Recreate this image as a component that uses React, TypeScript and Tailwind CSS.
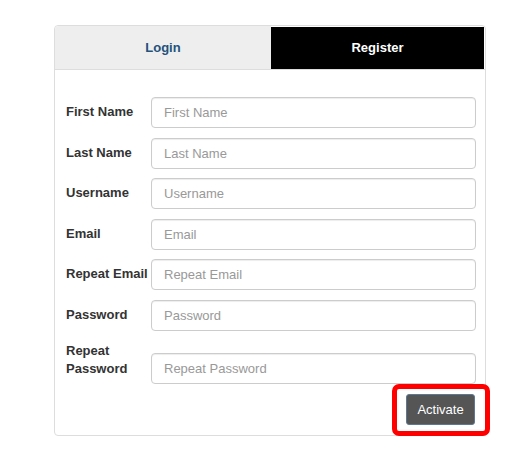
import React from "react";

const fields = [
  { label: "First Name", placeholder: "First Name", type: "text" },
  { label: "Last Name", placeholder: "Last Name", type: "text" },
  { label: "Username", placeholder: "Username", type: "text" },
  { label: "Email", placeholder: "Email", type: "email" },
  { label: "Repeat Email", placeholder: "Repeat Email", type: "email" },
  { label: "Password", placeholder: "Password", type: "password" },
];

const inputClass =
  "h-[31px] flex-1 rounded-[4px] border border-[#cccccc] bg-white px-3 text-[13px] text-[#555] shadow-[inset_0_1px_1px_rgba(0,0,0,0.075)] outline-none placeholder:text-[#999999]";

export default function App() {
  return (
    <div className="min-h-screen bg-white pt-[25px] font-['Liberation_Sans',Arial,sans-serif]">
      <div className="relative ml-[54px] w-[432px] rounded-[4px] border border-[#dddddd] bg-white">
        <div className="flex h-[44px] border-b border-[#dddddd]">
          <button className="flex-1 rounded-tl-[4px] bg-[#eeeeee] text-[13px] font-bold text-[#23527c]">
            Login
          </button>
          <button className="mr-px mt-px w-[213px] bg-black text-[13px] font-bold text-white">
            Register
          </button>
        </div>

        <form className="flex flex-col gap-[9.5px] pl-[11px] pr-[9px] pt-[27px]">
          {fields.map((f) => (
            <div key={f.label} className="flex items-start">
              <label className="w-[85px] shrink-0 whitespace-nowrap pt-[6px] text-[13px] font-bold leading-[18px] text-[#333]">
                {f.label}
              </label>
              <input type={f.type} placeholder={f.placeholder} className={inputClass} />
            </div>
          ))}
          <div className="flex items-start">
            <label className="w-[85px] shrink-0 pt-[2px] text-[13px] font-bold leading-[18px] text-[#333]">
              Repeat
              <br />
              Password
            </label>
            <input type="password" placeholder="Repeat Password" className={`${inputClass} mt-[13px]`} />
          </div>
        </form>

        <div className="flex justify-end pb-[10px] pr-[10px] pt-[10px]">
          <button className="h-[31px] w-[69px] rounded-[3px] border border-[#5f7892] bg-[#555555] text-[13px] text-white">
            Activate
          </button>
        </div>

        <div className="pointer-events-none absolute bottom-[-1px] right-[-5px] h-[52px] w-[98px] rounded-[7px] border-[5px] border-[#ff0000]" />
      </div>
    </div>
  );
}
